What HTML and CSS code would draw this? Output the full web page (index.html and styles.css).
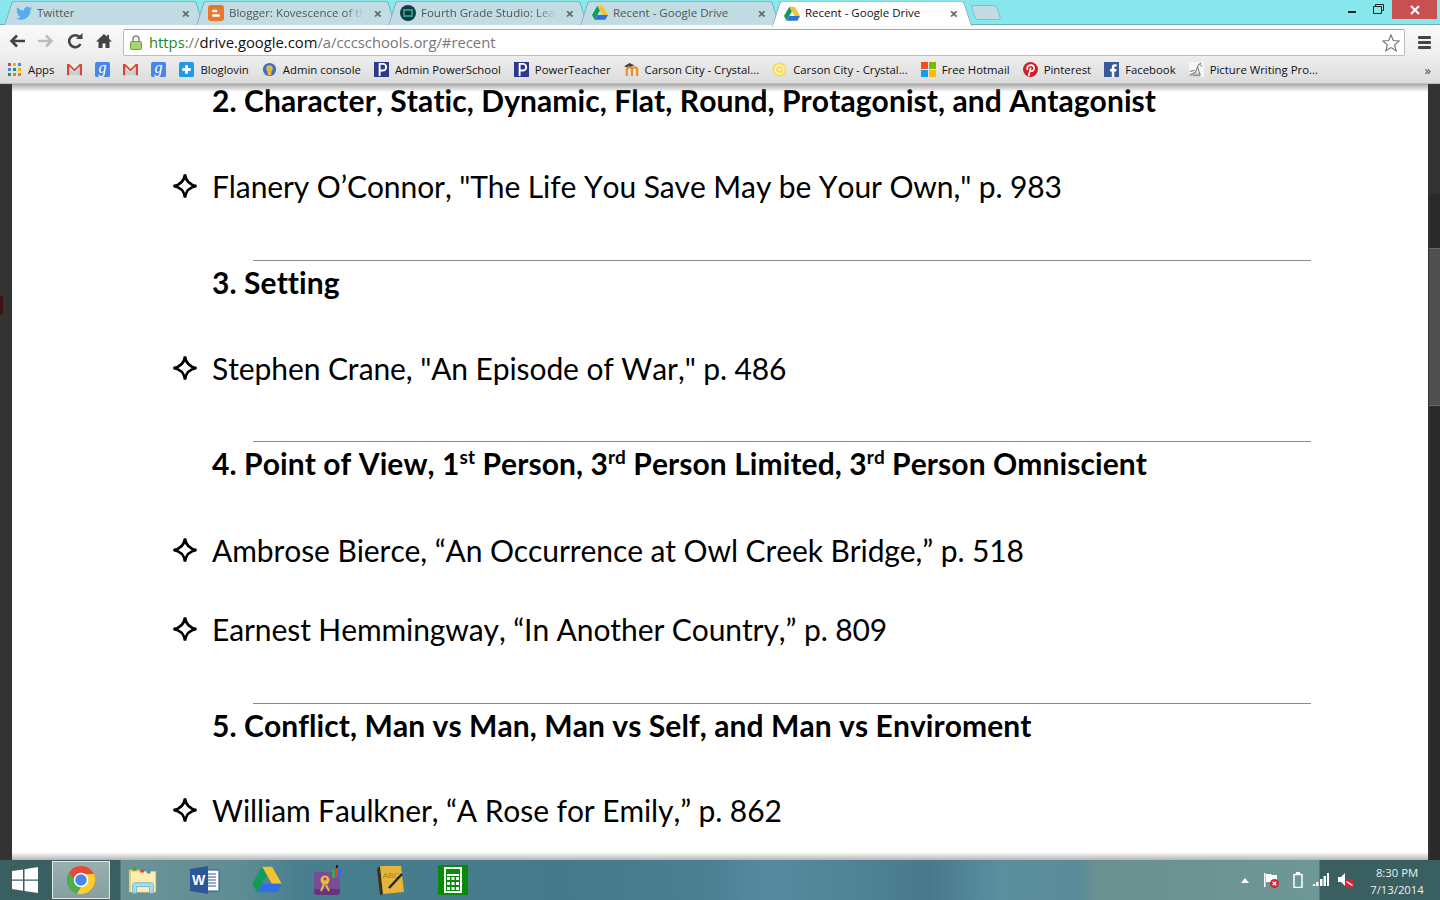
FILE: index.html
```html
<!DOCTYPE html>
<html>

<head>
  <title>Recent - Google Drive</title>
  <link rel="stylesheet" href="styles.css">
</head>

<body>
  <svg class="defs" width="0" height="0">
    <symbol id="i-drive" viewBox="0 0 24 22">
      <path fill="#0f9d58" d="M8 0 0 14l4 7 8-14z"/>
      <path fill="#f4c430" d="M8 0h8l8 14h-8z"/>
      <path fill="#2f6fe4" d="M4 21l4-7h16l-4 7z"/>
    </symbol>
    <symbol id="i-gmail" viewBox="0 0 16 14">
      <path fill="#f2efe9" d="M1 1h14v12H1z"/>
      <path fill="#c9d0d0" d="M3 13V6l5 4 5-4v7z"/>
      <path fill="#d8463a" d="M0 1h2.500v12H0zM13.500 1H16v12h-2.500zM0 1h2.500L8 6.500 13.500 1H16L8 9z"/>
    </symbol>
    <symbol id="i-g" viewBox="0 0 16 16">
      <rect width="16" height="16" rx="2" fill="#4a86e8"/>
      <text x="8" y="12" text-anchor="middle" class="g-letter">g</text>
    </symbol>
    <symbol id="i-p" viewBox="0 0 16 16">
      <rect width="16" height="16" fill="#2b3a8c"/>
      <path fill="none" stroke="#fff" stroke-width="2" d="M6 15V2h3.500a3 3 0 0 1 0 7H6"/>
    </symbol>
    <symbol id="i-sparkle" viewBox="0 0 26 26">
      <path fill="#fff" stroke="#000" stroke-width="2.600" stroke-linejoin="miter" d="M13 1.500c1 7 4.500 10.500 11.500 11.500-7 1-10.500 4.500-11.500 11.500C12 17.500 8.500 14 1.500 13 8.500 12 12 8.500 13 1.500z"/>
    </symbol>
  </svg>

  <div class="tabstrip">
    <div class="tab">
      <svg class="favicon" viewBox="0 0 16 16"><path fill="#55acee" d="M16 3.200c-.6.300-1.200.4-1.900.5.700-.4 1.200-1 1.400-1.800-.6.4-1.300.7-2 .8A3.300 3.300 0 0 0 8 5.700C5.300 5.600 2.900 4.300 1.100 2.300c-.9 1.500-.4 3.400 1 4.400-.5 0-1-.2-1.500-.4 0 1.600 1.100 3 2.600 3.300-.5.100-1 .100-1.500 0 .4 1.300 1.600 2.200 3.100 2.300A6.600 6.600 0 0 1 0 13.200 9.300 9.300 0 0 0 14.400 4.900c.6-.4 1.200-1 1.600-1.700z"/></svg>
      <span class="tab-title">Twitter</span><span class="tab-close">×</span>
    </div>
    <div class="tab">
      <svg class="favicon" viewBox="0 0 16 16"><rect width="16" height="16" rx="3" fill="#e8782b"/><path fill="none" stroke="#fff" stroke-width="2.400" stroke-linecap="round" d="M5.200 6h3M5.200 10.500h5.600"/></svg>
      <span class="tab-title clipped">Blogger: Kovescence of the</span><span class="tab-close">×</span>
    </div>
    <div class="tab">
      <svg class="favicon" viewBox="0 0 16 16"><circle cx="8" cy="8" r="8" fill="#17384a"/><rect x="3" y="4" width="10" height="8" fill="#1f9d7a"/><rect x="5" y="6" width="6" height="4" fill="#14303c"/></svg>
      <span class="tab-title clipped">Fourth Grade Studio: Learn</span><span class="tab-close">×</span>
    </div>
    <div class="tab">
      <svg class="favicon"><use href="#i-drive"/></svg>
      <span class="tab-title">Recent - Google Drive</span><span class="tab-close">×</span>
    </div>
    <div class="tab active">
      <svg class="favicon"><use href="#i-drive"/></svg>
      <span class="tab-title">Recent - Google Drive</span><span class="tab-close">×</span>
    </div>
    <div class="new-tab"></div>
    <div class="win-controls">
      <svg class="win-min" viewBox="0 0 8 2"><rect width="8" height="2" fill="#222"/></svg>
      <svg class="win-max" viewBox="0 0 11 10"><path fill="none" stroke="#222" d="M2.500 2.500V.5h8v6h-2M.5 2.500h8v7h-8z"/></svg>
      <div class="win-close"><svg viewBox="0 0 10 10"><path stroke="#fff" stroke-width="2" d="M1 1l8 8M9 1l-8 8"/></svg></div>
    </div>
  </div>

  <div class="toolbar">
    <svg class="nav-btn" viewBox="0 0 16 14"><path fill="none" stroke="#444" stroke-width="2.600" d="M16 7H3M8 1.500 2.500 7 8 12.500"/></svg>
    <svg class="nav-btn" viewBox="0 0 16 14"><path fill="none" stroke="#bdbdbd" stroke-width="2.600" d="M0 7h13M8 1.500 13.500 7 8 12.500"/></svg>
    <svg class="nav-btn" viewBox="0 0 16 16"><path fill="none" stroke="#444" stroke-width="2.600" d="M13.500 11A6 6 0 1 1 12.500 4"/><path fill="#444" d="M9 6h6.500V0z"/></svg>
    <svg class="nav-btn" viewBox="0 0 16 16"><path fill="#444" d="M8 1 0 8.500h2.500V15h4v-4.500h3V15h4V8.500H16l-3-2.800V2h-2v1.800z"/></svg>
    <div class="omnibox">
      <svg class="lock" viewBox="0 0 12 15"><path fill="none" stroke="#888" stroke-width="1.500" d="M3 7V4a3 3 0 0 1 6 0v3"/><rect x=".5" y="6.500" width="11" height="8" rx="1" fill="#a4d66c" stroke="#6f9e45"/></svg>
      <div class="url"><span class="url-https">https</span><span class="url-dim">://</span>drive.google.com<span class="url-dim">/a/cccschools.org/#recent</span></div>
      <svg class="star" viewBox="0 0 18 18"><path fill="#fff" stroke="#777" stroke-width="1.200" d="M9 1l2.300 5.500 5.900.5-4.500 3.900 1.400 5.800L9 13.600l-5.100 3.100 1.400-5.800L.8 7l5.900-.5z"/></svg>
    </div>
    <div class="menu-btn"><span></span><span></span><span></span></div>
  </div>

  <div class="bookmarks">
    <div class="bm bm-apps">
      <svg class="bm-icon" viewBox="0 0 13 13"><path fill="#d8463a" d="M0 0h3v3H0z"/><path fill="#f4b400" d="M5 0h3v3H5zM10 5h3v3h-3z"/><path fill="#4285f4" d="M10 0h3v3h-3zM0 5h3v3H0z"/><path fill="#0f9d58" d="M5 5h3v3H5zM0 10h3v3H0z"/><path fill="#f07a1a" d="M5 10h3v3H5zM10 10h3v3h-3z"/></svg>
      <span>Apps</span>
    </div>
    <div class="bm"><svg class="bm-icon"><use href="#i-gmail"/></svg></div>
    <div class="bm"><svg class="bm-icon"><use href="#i-g"/></svg></div>
    <div class="bm"><svg class="bm-icon"><use href="#i-gmail"/></svg></div>
    <div class="bm"><svg class="bm-icon"><use href="#i-g"/></svg></div>
    <div class="bm">
      <svg class="bm-icon" viewBox="0 0 16 16"><rect width="16" height="16" rx="2" fill="#1d9ae8"/><path stroke="#fff" stroke-width="3" d="M8 3.500v9M3.500 8h9"/></svg>
      <span>Bloglovin</span>
    </div>
    <div class="bm">
      <svg class="bm-icon" viewBox="0 0 16 16"><circle cx="8" cy="8" r="7" fill="#3e6fc4"/><circle cx="8" cy="7" r="3.500" fill="#e8b93a"/><path fill="#e8b93a" d="M6 9h4v5H6z"/></svg>
      <span>Admin console</span>
    </div>
    <div class="bm"><svg class="bm-icon"><use href="#i-p"/></svg><span>Admin PowerSchool</span></div>
    <div class="bm"><svg class="bm-icon"><use href="#i-p"/></svg><span>PowerTeacher</span></div>
    <div class="bm">
      <svg class="bm-icon" viewBox="0 0 16 16"><path fill="#444" d="M0 4.500l6-3.500 5 2.500-6 3z"/><path fill="none" stroke="#e8912a" stroke-width="2.400" d="M3 15V8M8.500 15V8.500a2.700 2.700 0 0 0-5.500 0M14 15V8.500a2.700 2.700 0 0 0-5.500 0"/></svg>
      <span>Carson City - Crystal...</span>
    </div>
    <div class="bm">
      <svg class="bm-icon" viewBox="0 0 16 16"><circle cx="8" cy="8" r="7.500" fill="#f6dc62"/><circle cx="8" cy="8" r="4.500" fill="none" stroke="#fff8c8" stroke-width="1.500"/><circle cx="8" cy="8" r="1.500" fill="#fff8c8"/></svg>
      <span>Carson City - Crystal...</span>
    </div>
    <div class="bm">
      <svg class="bm-icon" viewBox="0 0 16 16"><path fill="#f25022" d="M0 0h7.500v7.500H0z"/><path fill="#7fba00" d="M8.500 0H16v7.500H8.500z"/><path fill="#00a4ef" d="M0 8.500h7.500V16H0z"/><path fill="#ffb900" d="M8.500 8.500H16V16H8.500z"/></svg>
      <span>Free Hotmail</span>
    </div>
    <div class="bm">
      <svg class="bm-icon" viewBox="0 0 16 16"><circle cx="8" cy="8" r="8" fill="#cb2027"/><path fill="none" stroke="#fff" stroke-width="1.800" d="M6 15l2.200-9M4.800 8.500C3.500 5.500 5.500 3.300 8.300 3.300c2.600 0 4 1.800 3.500 4-.4 2-2.600 3.300-4.300 1.800"/></svg>
      <span>Pinterest</span>
    </div>
    <div class="bm">
      <svg class="bm-icon" viewBox="0 0 16 16"><rect width="16" height="16" fill="#3b5998"/><path fill="#fff" d="M11 16V10h2l.4-2.500H11V6c0-.8.300-1.200 1.200-1.200h1.300V2.500H11.600C9.300 2.500 8.300 3.800 8.300 5.700v1.800H6.500V10h1.800v6z"/></svg>
      <span>Facebook</span>
    </div>
    <div class="bm">
      <svg class="bm-icon" viewBox="0 0 16 16"><rect width="16" height="16" fill="#f6f6f6"/><path fill="#d5d5d5" d="M0 13l7-3 5 2v4H0z"/><path fill="none" stroke="#666" d="M1 14l6-3 3-8 3-2M9 5l3 9H4M1 10l5-1M11 2l3 3"/></svg>
      <span>Picture Writing Pro...</span>
    </div>
    <div class="bm-more">»</div>
  </div>

  <div class="viewer">
    <div class="gutter"><div class="gutter-mark"></div></div>

    <div class="paper">
      <h2 class="doc-head">2. Character, Static, Dynamic, Flat, Round, Protagonist, and Antagonist</h2>
      <ul class="doc-list">
        <li><svg class="sparkle"><use href="#i-sparkle"/></svg>Flanery O’Connor, "The Life You Save May be Your Own," p. 983</li>
      </ul>

      <div class="doc-section wide">
        <h2 class="doc-head">3. Setting</h2>
        <ul class="doc-list">
          <li><svg class="sparkle"><use href="#i-sparkle"/></svg>Stephen Crane, "An Episode of War," p. 486</li>
        </ul>
      </div>

      <div class="doc-section">
        <h2 class="doc-head">4. Point of View, 1<sup>st</sup> Person, 3<sup>rd</sup> Person Limited, 3<sup>rd</sup> Person Omniscient</h2>
        <ul class="doc-list">
          <li class="loose"><svg class="sparkle"><use href="#i-sparkle"/></svg>Ambrose Bierce, “An Occurrence at Owl Creek Bridge,” p. 518</li>
          <li><svg class="sparkle"><use href="#i-sparkle"/></svg>Earnest Hemmingway, “In Another Country,” p. 809</li>
        </ul>
      </div>

      <div class="doc-section wide">
        <h2 class="doc-head">5. Conflict, Man vs Man, Man vs Self, and Man vs Enviroment</h2>
        <ul class="doc-list">
          <li class="tight"><svg class="sparkle"><use href="#i-sparkle"/></svg>William Faulkner, “A Rose for Emily,” p. 862</li>
        </ul>
      </div>
    </div>

    <div class="scrollbar"><div class="scroll-track"><div class="scroll-thumb"></div></div></div>
    <div class="shade-top"></div>
    <div class="shade-bottom"></div>
  </div>

  <div class="taskbar">
    <div class="start">
      <svg viewBox="0 0 26 26"><path fill="#fff" d="M0 4l11-1.500V12.500H0zM12.500 2.300 26 0v12.500H12.500zM0 13.800h11v9.900L0 22zM12.500 13.800H26V26l-13.500-2z"/></svg>
    </div>
    <div class="pin pin-active">
      <svg viewBox="0 0 30 30"><circle cx="15" cy="15" r="14" fill="#e8483a"/><path fill="#4cae4f" d="M3 7.500A14 14 0 0 0 11 28.500L17 18 9 15z"/><path fill="#fcd12f" d="M29 15a14 14 0 0 1-18 13.500l7-11.500-2-8h12a14 14 0 0 1 1 6z"/><circle cx="15" cy="15" r="6.500" fill="#4a86e8" stroke="#fff" stroke-width="1.500"/></svg>
    </div>
    <div class="pin">
      <svg viewBox="0 0 32 30"><path fill="#e8c868" d="M1 4h11l2 2h16v22H1z"/><path fill="#fdeeb0" d="M3 6h26v22H3z"/><path fill="#35a845" d="M5 2h4v3H5z"/><path fill="#d24a3a" d="M13 4h4v3h-4z"/><path fill="#3a8ad8" d="M20 5h4v3h-4z"/><path fill="#a8dcf0" stroke="#6fb4d8" d="M5 29v-9a2 2 0 0 1 2-2h18a2 2 0 0 1 2 2v9h-4v-7H9v7z"/></svg>
    </div>
    <div class="pin">
      <svg viewBox="0 0 30 30"><path fill="#fff" stroke="#2b579a" d="M12 5h17v21H12z"/><path stroke="#2b579a" d="M18 9h8M18 12h8M18 15h8M18 18h8M18 21h8"/><path fill="#2b579a" d="M0 4l18-3v28L0 26z"/><text x="8.500" y="20" text-anchor="middle" class="word-letter">W</text></svg>
    </div>
    <div class="pin">
      <svg viewBox="0 0 30 27"><use href="#i-drive"/></svg>
    </div>
    <div class="pin">
      <svg viewBox="0 0 30 30"><rect y="7" width="26" height="23" rx="3" fill="#7d4a9a"/><path fill="#64357c" d="M0 24h26v3a3 3 0 0 1-3 3H3a3 3 0 0 1-3-3z"/><circle cx="11" cy="15" r="4.500" fill="#e8b93a"/><circle cx="11" cy="14" r="1.500" fill="#7d4a9a"/><path stroke="#e8b93a" stroke-width="2" d="M10 19l-3 7M12 20l3 6"/><path fill="#3aa655" d="M18 5h3v8h-3z"/><path fill="#d2452f" d="M21 2h3v10h-3z"/><path fill="#2f6fe4" d="M24 4h3v9h-3z"/><path fill="#222" d="M22 0h2v3h-2z"/></svg>
    </div>
    <div class="pin">
      <svg viewBox="0 0 28 30"><path fill="#3e2e14" d="M0 4l3-3 3 28-3 1z"/><path fill="#e3b53a" d="M3 1h21l3 26L6 29z"/><text x="14" y="13" class="abc-letter" text-anchor="middle">ABC</text><path stroke="#222" stroke-width="2.400" d="M12 23 25 9"/></svg>
    </div>
    <div class="pin">
      <svg viewBox="0 0 30 30"><rect width="30" height="30" fill="#0a8a0a"/><path fill="none" stroke="#fff" stroke-width="2" d="M7 3h16v24H7z"/><path fill="#fff" d="M9 9h12v2H9zM9 12h3v3H9zM13.500 12h3v3h-3zM18 12h3v3h-3zM9 17h3v3H9zM13.500 17h3v3h-3zM18 17h3v3h-3zM9 22h3v3H9zM13.500 22h3v3h-3zM18 22h3v3h-3z"/></svg>
    </div>

    <div class="tray">
      <svg class="tray-arrow" viewBox="0 0 8 5"><path fill="#fff" d="M4 0l4 5H0z"/></svg>
      <svg class="tray-flag" viewBox="0 0 16 16"><path fill="#fff" d="M1 1h1.500v14H1z"/><path fill="#fff" d="M3 2h5l1 1h5v7H3z"/><circle cx="11.500" cy="11.500" r="4.500" fill="#e02030"/><path stroke="#fff" stroke-width="1.300" d="M9.700 9.700l3.600 3.600M13.300 9.700l-3.600 3.600"/></svg>
      <svg class="tray-battery" viewBox="0 0 10 16"><path fill="none" stroke="#fff" stroke-width="1.500" d="M1 2.500h8v13H1z"/><path fill="#fff" d="M3 0h4v2H3z"/></svg>
      <svg class="tray-signal" viewBox="0 0 16 16"><path fill="#fff" d="M0 12h2v2H0zM3 10h2.500v4H3zM7 7h2.500v7H7zM10.500 4H13v10h-2.500zM14 1h2v13h-2z"/></svg>
      <svg class="tray-sound" viewBox="0 0 16 16"><path fill="#fff" d="M0 5h3l4-4v13l-4-4H0z"/><circle cx="11.500" cy="11.500" r="4.500" fill="#e02030"/><path stroke="#fff" stroke-width="1.500" d="M8.500 9.500l6 4"/></svg>
      <div class="clock">8:30 PM<br>7/13/2014</div>
    </div>
  </div>
</body>

</html>
```

FILE: styles.css
```css
html, body {
    margin: 0;
    padding: 0;
    height: 100%;
    overflow: hidden;
}
body {
    display: flex;
    flex-direction: column;
    width: 1440px;
    height: 900px;
    font-family: "Open Sans", "Noto Sans", sans-serif;
    background-color: #fff;
}
.defs {
    position: absolute;
}
.g-letter {
    font-family: "Liberation Serif", serif;
    font-size: 17px;
    font-style: italic;
    fill: #fff;
}
.word-letter {
    font-family: "Liberation Sans", sans-serif;
    font-size: 14px;
    font-weight: bold;
    fill: #fff;
}
.abc-letter {
    font-family: "Liberation Sans", sans-serif;
    font-size: 8px;
    fill: #a5801f;
}

/* tab strip */
.tabstrip {
    display: flex;
    flex: none;
    height: 25px;
    padding-left: 8px;
    background-color: #87e7ed;
    border-bottom: 1px solid #6ab0b6;
    box-sizing: border-box;
}
.tab {
    position: relative;
    z-index: 1;
    display: flex;
    flex: none;
    align-items: center;
    box-sizing: border-box;
    width: 192px;
    height: 24px;
    margin-top: 1px;
    padding: 0 10px 0 8px;
    font-size: 11.5px;
    color: #555;
}
.tab::before,
.tab::after {
    content: "";
    position: absolute;
    z-index: -1;
    top: 0;
    bottom: 0;
    width: 55%;
    background-color: #c1dde3;
    border-top: 1px solid #7dbcc2;
}
.tab::before {
    left: 0;
    border-left: 1px solid #7d9ea3;
    border-radius: 3px 0 0 0;
    transform: skewX(-18deg);
}
.tab::after {
    right: 0;
    border-right: 1px solid #7d9ea3;
    border-radius: 0 3px 0 0;
    transform: skewX(18deg);
}
.tab.active {
    z-index: 2;
    height: 25px;
    color: #111;
}
.tab.active::before,
.tab.active::after {
    background-color: #fff;
    border-top-color: #bbb;
}
.favicon {
    flex: none;
    width: 16px;
    height: 16px;
    margin-right: 5px;
}
.tab-title {
    flex: 1;
    margin: 0 8px 2px 0;
    overflow: hidden;
    white-space: nowrap;
}
.tab-title.clipped {
    -webkit-mask-image: linear-gradient(90deg, #000 85%, transparent);
    mask-image: linear-gradient(90deg, #000 85%, transparent);
}
.tab-close {
    flex: none;
    font-size: 15px;
    font-weight: bold;
    line-height: 1;
    color: #666;
}
.new-tab {
    flex: none;
    width: 26px;
    height: 15px;
    margin: 5px 0 0 5px;
    background-color: #c1dde3;
    border: 1px solid #7bc4ca;
    border-radius: 3px;
    box-sizing: border-box;
    transform: skewX(18deg);
}
.win-controls {
    display: flex;
    align-items: flex-start;
    margin-left: auto;
    padding-right: 3px;
}
.win-min {
    width: 8px;
    height: 2px;
    margin: 11px 17px 0 0;
}
.win-max {
    width: 11px;
    height: 10px;
    margin: 4px 8px 0 0;
}
.win-close {
    display: flex;
    align-items: center;
    justify-content: center;
    width: 45px;
    height: 19px;
    background-color: #c75050;
}
.win-close svg {
    width: 10px;
    height: 10px;
}

/* toolbar */
.toolbar {
    display: flex;
    flex: none;
    align-items: center;
    box-sizing: border-box;
    height: 31px;
    padding: 0 9px 0 9px;
    background: linear-gradient(#fafafa, #eeeeee);
}
.nav-btn {
    flex: none;
    width: 16px;
    height: 16px;
    margin-right: 13px;
}
.omnibox {
    display: flex;
    flex: 1;
    align-items: center;
    box-sizing: border-box;
    height: 27px;
    margin: 4px 0 0 -2px;
    padding: 0 4px 0 6px;
    background-color: #fff;
    border: 1px solid #bdbdbd;
    border-top-color: #a8a8a8;
    border-radius: 2px;
}
.lock {
    flex: none;
    width: 12px;
    height: 15px;
    margin-right: 7px;
}
.url {
    flex: 1;
    padding-bottom: 1px;
    font-size: 14.8px;
    color: #111;
    white-space: nowrap;
}
.url-https {
    color: #1a8a2a;
}
.url-dim {
    color: #777;
}
.star {
    flex: none;
    width: 18px;
    height: 18px;
}
.menu-btn {
    display: flex;
    flex: none;
    flex-direction: column;
    gap: 2px;
    width: 13px;
    margin: 4px 0 0 13px;
}
.menu-btn span {
    height: 3px;
    background-color: #444;
    border-radius: 1px;
}

/* bookmarks */
.bookmarks {
    display: flex;
    flex: none;
    align-items: center;
    gap: 13px;
    box-sizing: border-box;
    height: 28px;
    padding: 0 9px 0 8px;
    font-size: 11.35px;
    color: #111;
    background: linear-gradient(#eeeeee, #dcdcdc);
    border-bottom: 1px solid #bbb;
    white-space: nowrap;
}
.bm {
    display: flex;
    flex: none;
    align-items: center;
    gap: 6px;
}
.bm-icon {
    flex: none;
    width: 15px;
    height: 15px;
}
.bm-apps {
    gap: 7px;
}
.bm-apps .bm-icon {
    width: 13px;
    height: 13px;
}
.bm-more {
    margin-left: auto;
    font-size: 13px;
    color: #444;
}

/* document viewer */
.viewer {
    position: relative;
    display: flex;
    flex: 1;
    min-height: 0;
    overflow: hidden;
}
.gutter {
    position: relative;
    flex: none;
    width: 12px;
    background-color: #333;
}
.gutter-mark {
    width: 3px;
    height: 18px;
    margin-top: 212px;
    background-color: #3d1413;
}
.paper {
    flex: 1;
    padding-left: 200px;
    color: #000;
    background-color: #fff;
    font-family: Lato, "Open Sans", sans-serif;
    font-kerning: none;
}
.doc-head {
    margin: -1px 0 0;
    font-size: 30px;
    font-weight: bold;
    letter-spacing: .07px;
    line-height: 34px;
    white-space: nowrap;
}
.doc-head sup {
    font-size: 19px;
    line-height: 0;
}
.doc-section {
    position: relative;
    margin-top: 56px;
    padding-top: 6px;
}
.doc-section.wide {
    margin-top: 57px;
}
.doc-section::before {
    content: "";
    position: absolute;
    top: 0;
    left: 41px;
    width: 1058px;
    height: 1px;
    background-color: #8a8a8a;
}
.doc-list {
    margin: 0;
    padding: 0;
    list-style: none;
    font-size: 30px;
    letter-spacing: -.1px;
    line-height: 34px;
}
.doc-list li {
    display: flex;
    align-items: center;
    margin-top: 52px;
    margin-left: -40px;
    white-space: nowrap;
}
.doc-list li.loose {
    margin-top: 53px;
}
.doc-list li.tight {
    margin-top: 51px;
}
.doc-list li + li {
    margin-top: 45px;
}
.sparkle {
    flex: none;
    width: 26px;
    height: 26px;
    margin-right: 14px;
}
.scrollbar {
    flex: none;
    width: 12px;
    background-color: #333;
}
.scroll-track {
    height: calc(100% - 110px);
    margin: 110px 0 0 2px;
    background-color: #2a2a2a;
}
.scroll-thumb {
    position: relative;
    top: 54px;
    left: -1px;
    width: 11px;
    height: 158px;
    background-color: #4f4f4f;
    border-top: 1px solid #6a6a6a;
    border-bottom: 1px solid #6a6a6a;
    box-sizing: border-box;
}
.shade-top,
.shade-bottom {
    position: absolute;
    left: 12px;
    right: 12px;
    height: 8px;
}
.shade-top {
    top: 0;
    background: linear-gradient(#a9a9a9, rgba(255, 255, 255, 0));
}
.shade-bottom {
    bottom: 0;
    background: linear-gradient(rgba(255, 255, 255, 0), #b5b5b5);
}

/* taskbar */
.taskbar {
    display: flex;
    flex: none;
    align-items: center;
    height: 40px;
    background: linear-gradient(90deg, #3a5f60 0, #3a5f60 120px, #6a9396 121px, #5f8d93 240px, #477f8f 300px, #457a8a 560px, #4a7f92 700px, #568aa0 770px, #4f8496 850px, #47798a 930px, #5b8f9f 1000px, #5a8b99 1080px, #6a9090 1095px, #6d9896 1319px, #3a5f60 1320px, #3a5f60 100%);
}
.start {
    display: flex;
    flex: none;
    justify-content: center;
    width: 50px;
}
.start svg {
    width: 26px;
    height: 26px;
}
.pin {
    display: flex;
    flex: none;
    align-items: center;
    justify-content: center;
    box-sizing: border-box;
    width: 62px;
    height: 40px;
}
.pin svg {
    width: 30px;
    height: 30px;
}
.pin-active {
    width: 58px;
    height: 38px;
    margin: 0 2px;
    background: linear-gradient(#9aafae, #84a09f);
    border: 1px solid #dfe7e7;
}
.tray {
    display: flex;
    flex: 1;
    align-items: center;
    justify-content: flex-end;
    height: 100%;
    color: #fff;
}
.tray-arrow {
    width: 8px;
    height: 5px;
    margin-right: 14px;
}
.tray-flag {
    width: 16px;
    height: 16px;
    margin-right: 14px;
}
.tray-battery {
    width: 10px;
    height: 16px;
    margin-right: 10px;
}
.tray-signal {
    width: 16px;
    height: 16px;
    margin-right: 9px;
}
.tray-sound {
    width: 16px;
    height: 16px;
}
.clock {
    width: 86px;
    padding-top: 1px;
    font-size: 11.3px;
    line-height: 17px;
    text-align: center;
    color: #e8efef;
}
```
